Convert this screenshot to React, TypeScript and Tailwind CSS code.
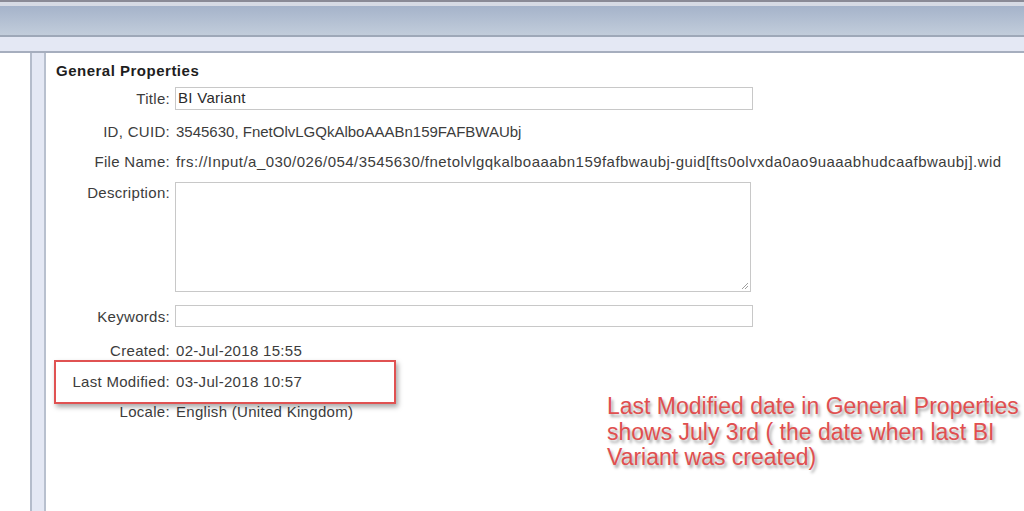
function Label({ children, top }: { children: React.ReactNode; top?: boolean }) {
  return (
    <div
      className={`text-right text-[15px] leading-[17px] tracking-[0.3px] text-[#3c3c3c] ${
        top ? "self-start pt-[2px]" : ""
      }`}
    >
      {children}
    </div>
  );
}

function Value({ children, tight, wide }: { children: React.ReactNode; tight?: boolean; wide?: boolean }) {
  return (
    <div
      className={`whitespace-nowrap pl-[1px] text-[15px] leading-[17px] text-[#3c3c3c] ${
        tight ? "tracking-[0px]" : wide ? "tracking-[0.45px]" : "tracking-[0.3px]"
      }`}
    >
      {children}
    </div>
  );
}

function Gap({ h }: { h: string }) {
  return <div className={`col-span-2 ${h}`} />;
}

export default function App() {
  return (
    <div
      className="flex h-[511px] w-[1024px] flex-col overflow-hidden bg-white"
      style={{ fontFamily: "'Liberation Sans', Arial, sans-serif" }}
    >
      {/* header bands */}
      <div className="h-[2px] bg-[#8a8a96]" />
      <div className="h-[4px] bg-[#d6dae4]" />
      <div className="h-[29px] bg-gradient-to-b from-[#a5b3ca] to-[#c2cddb]" />
      <div className="h-[2px] bg-[#9ea8b8]" />
      <div className="h-[14px] bg-[#e4e8f4]" />
      <div className="h-[2px] bg-[#a6aebe]" />

      <div className="flex flex-1">
        <div className="w-[32px] border-r-2 border-[#b4bccb] bg-white" />
        <div className="w-[14px] border-r-2 border-[#b8c0ce] bg-[#e4e8f4]" />
        <div className="relative flex-1 bg-white pl-[10px] pt-[9px]">
          <div className="text-[15px] font-bold leading-[17px] tracking-[0.5px] text-[#1e1e1e]">
            General Properties
          </div>

          <div className="mt-[8px] grid grid-cols-[114px_1fr] items-center gap-x-[5px]">
            <Label>Title:</Label>
            <div className="flex h-[23px] w-[578px] items-center border border-[#c8c8c8] px-[2px] text-[15px] tracking-[0.3px] text-[#2a2a2a]">
              BI Variant
            </div>

            <Gap h="h-[13px]" />
            <Label>ID, CUID:</Label>
            <Value tight>3545630, FnetOlvLGQkAlboAAABn159FAFBWAUbj</Value>

            <Gap h="h-[13px]" />
            <Label>File Name:</Label>
            <Value wide>
              frs://Input/a_030/026/054/3545630/fnetolvlgqkalboaaabn159fafbwaubj-guid[fts0olvxda0ao9uaaabhudcaafbwaubj].wid
            </Value>

            <Gap h="h-[12px]" />
            <Label top>Description:</Label>
            <div className="relative h-[110px] w-[576px] border border-[#c8c8c8]">
              <svg className="absolute bottom-[1px] right-[1px]" width="9" height="9" viewBox="0 0 9 9">
                <path d="M8 2 L2 8 M8 5 L5 8" stroke="#a0a0a0" strokeWidth="1" />
              </svg>
            </div>

            <Gap h="h-[13px]" />
            <Label>Keywords:</Label>
            <div className="h-[22px] w-[578px] border border-[#c8c8c8]" />

            <Gap h="h-[15px]" />
            <Label>Created:</Label>
            <Value>02-Jul-2018 15:55</Value>

            <Gap h="h-[14px]" />
            <Label>Last Modified:</Label>
            <Value>03-Jul-2018 10:57</Value>

            <Gap h="h-[13px]" />
            <Label>Locale:</Label>
            <Value>English (United Kingdom)</Value>
          </div>

          {/* annotation highlight */}
          <div className="absolute left-[8px] top-[307px] h-[44px] w-[342px] border-2 border-[#e05252] shadow-[2px_3px_5px_rgba(0,0,0,0.35)]" />

          <div className="absolute left-[561px] top-[341px] whitespace-nowrap text-[23px] leading-[25.5px] text-[#e04f4f] [text-shadow:2px_3px_3px_rgba(0,0,0,0.35)]">
            Last Modified date in General Properties
            <br />
            shows July 3rd ( the date when last BI
            <br />
            Variant was created)
          </div>
        </div>
      </div>
    </div>
  );
}
